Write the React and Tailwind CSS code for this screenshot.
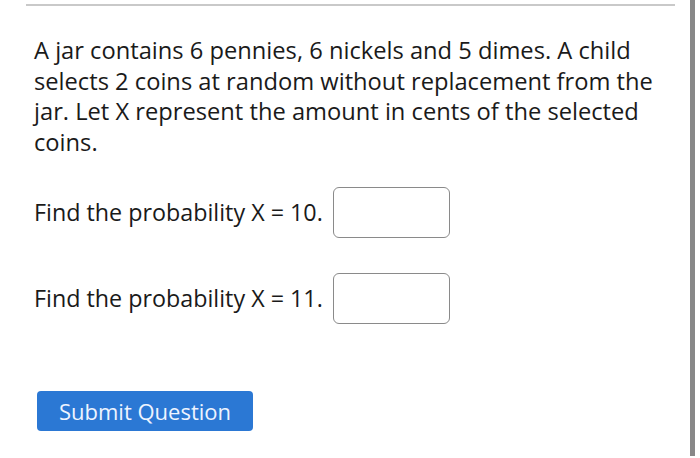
export default function App() {
  return (
    <div className="w-[700px] h-[458px] bg-white flex overflow-hidden" style={{ fontFamily: '"Open Sans", sans-serif' }}>
      <div className="flex-1 flex flex-col">
        <div className="mt-[4px] ml-[26px] mr-[15px] h-[2px] bg-[#c9c9c9]" />
        <p className="ml-[34px] mt-[29px] text-[23.7px] leading-[30.7px] text-[#1a1a1a] whitespace-nowrap">
          A jar contains 6 pennies, 6 nickels and 5 dimes. A child<br />
          selects 2 coins at random without replacement from the<br />
          jar. Let X represent the amount in cents of the selected<br />
          coins.
        </p>
        <div className="ml-[34px] mt-[29px] flex items-center gap-[10px]">
          <span className="text-[23.3px] text-[#1a1a1a]">Find the probability X = 10.</span>
          <div className="w-[117px] h-[51px] border-[1.5px] border-[#8a8a8a] rounded-[6px]" />
        </div>
        <div className="ml-[34px] mt-[35px] flex items-center gap-[10px]">
          <span className="text-[23.3px] text-[#1a1a1a]">Find the probability X = 11.</span>
          <div className="w-[117px] h-[51px] border-[1.5px] border-[#8a8a8a] rounded-[6px]" />
        </div>
        <div className="ml-[37px] mt-[67px]">
          <button className="w-[216px] h-[40px] bg-[#2b78d4] rounded-[4px] text-[#eef4ff] text-[22px] leading-none">Submit Question</button>
        </div>
      </div>
      <div className="w-[5px] mr-[5px] h-[456px] bg-[#888888]" />
    </div>
  );
}
